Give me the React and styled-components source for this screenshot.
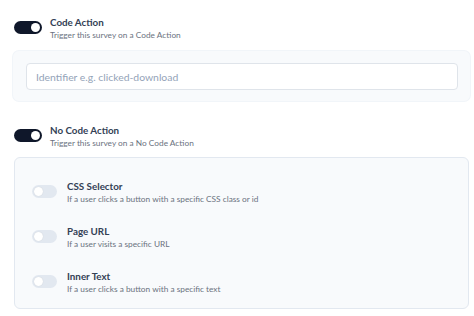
import React, { useState } from "react";
import styled, { createGlobalStyle } from "styled-components";

const Global = createGlobalStyle`
  html, body { margin: 0; padding: 0; background: #ffffff; }
  body { font-family: Lato, "Open Sans", "Liberation Sans", sans-serif; }
`;

const Page = styled.div`
  width: 474px;
  height: 316px;
  padding: 15px 4px 0 13px;
  box-sizing: border-box;
  display: flex;
  flex-direction: column;
`;

const Section = styled.div`
  display: flex;
  flex-direction: column;
  margin-bottom: ${p => p.gap || 0}px;
`;

const Row = styled.div`
  display: flex;
  align-items: center;
  gap: ${p => p.gap}px;
  padding-left: ${p => p.indent || 0}px;
`;

const Switch = styled.button`
  width: ${p => p.w}px;
  height: 13px;
  border-radius: 7px;
  border: none;
  padding: 0 2px;
  box-sizing: border-box;
  display: flex;
  align-items: center;
  justify-content: ${p => (p.on ? "flex-end" : "flex-start")};
  background: ${p => (p.on ? "#0f172a" : "#e2e8f0")};
  cursor: pointer;
  flex-shrink: 0;
  margin-top: -1px;
  &::after {
    content: "";
    width: 9px;
    height: 9px;
    border-radius: 50%;
    background: #ffffff;
    box-shadow: 0 0 1px rgba(0,0,0,0.15);
  }
`;

const Label = styled.div`
  display: flex;
  flex-direction: column;
`;

const Title = styled.div`
  font-size: 9.8px;
  font-weight: 700;
  color: #334155;
  line-height: 14px;
`;

const Sub = styled.div`
  font-size: 8.3px;
  color: #6b7280;
  line-height: 12px;
`;

const InputBox = styled.div`
  margin-top: 10px;
  padding: 12px 12px 11px 13px;
  background: #f8fafc;
  border-radius: 6px;
  box-shadow: 0 0 0 1px #f1f5f9;
`;

const Input = styled.input`
  width: 100%;
  box-sizing: border-box;
  height: 27px;
  border: 1px solid #dfe4ea;
  border-radius: 4px;
  background: #ffffff;
  padding: 0 9px;
  font-family: inherit;
  font-size: 10.4px;
  color: #334155;
  outline: none;
  &::placeholder { color: #94a3b8; }
`;

const Panel = styled.div`
  margin-top: 8px;
  margin-left: 1px;
  margin-right: 1px;
  height: 152px;
  box-sizing: border-box;
  background: #f8fafc;
  border: 1px solid #e2e8f0;
  border-radius: 6px;
  padding: 21px 0 0 17px;
  display: flex;
  flex-direction: column;
  gap: 19px;
`;

const options = [
  { id: "css", title: "CSS Selector", sub: "If a user clicks a button with a specific CSS class or id" },
  { id: "url", title: "Page URL", sub: "If a user visits a specific URL" },
  { id: "text", title: "Inner Text", sub: "If a user clicks a button with a specific text" },
];

export default function App() {
  const [codeOn, setCodeOn] = useState(true);
  const [noCodeOn, setNoCodeOn] = useState(true);
  const [sel, setSel] = useState({});

  return (
    <>
      <Global />
      <Page>
        <Section gap={22}>
          <Row gap={8} indent={1}>
            <Switch w={28} on={codeOn} onClick={() => setCodeOn(!codeOn)} />
            <Label>
              <Title>Code Action</Title>
              <Sub>Trigger this survey on a Code Action</Sub>
            </Label>
          </Row>
          <InputBox>
            <Input placeholder="Identifier e.g. clicked-download" />
          </InputBox>
        </Section>

        <Section>
          <Row gap={8} indent={1}>
            <Switch w={28} on={noCodeOn} onClick={() => setNoCodeOn(!noCodeOn)} />
            <Label>
              <Title>No Code Action</Title>
              <Sub>Trigger this survey on a No Code Action</Sub>
            </Label>
          </Row>
          <Panel>
            {options.map(o => (
              <Row key={o.id} gap={10}>
                <Switch w={25} on={!!sel[o.id]} onClick={() => setSel({ ...sel, [o.id]: !sel[o.id] })} />
                <Label>
                  <Title>{o.title}</Title>
                  <Sub>{o.sub}</Sub>
                </Label>
              </Row>
            ))}
          </Panel>
        </Section>
      </Page>
    </>
  );
}
